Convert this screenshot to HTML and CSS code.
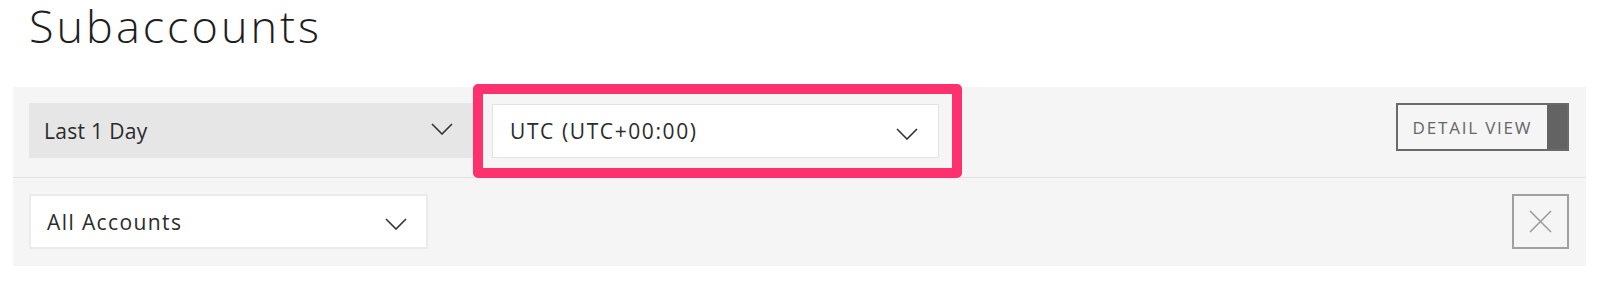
FILE: index.html
```html
<!DOCTYPE html>
<html lang="en">
<head>
<meta charset="utf-8">
<title>Subaccounts</title>
<link rel="stylesheet" href="styles.css">
</head>
<body>
<h1 class="title">Subaccounts</h1>
<div class="panel">
  <div class="row row-top">
    <div class="select select-grey">
      <span class="select-label">Last 1 Day</span>
      <svg class="chevron chevron-up" width="22" height="12" viewBox="0 0 22 12"><polyline points="1,1 11,11 21,1" fill="none" stroke="#333" stroke-width="1.6"/></svg>
    </div>
    <div class="highlight">
      <div class="select select-white select-tz">
        <span class="select-label">UTC (UTC+00:00)</span>
        <svg class="chevron" width="22" height="12" viewBox="0 0 22 12"><polyline points="1,1 11,11 21,1" fill="none" stroke="#333" stroke-width="1.6"/></svg>
      </div>
    </div>
    <button class="toggle" type="button">
      <span class="toggle-label">DETAIL VIEW</span>
      <span class="toggle-knob"></span>
    </button>
  </div>
  <div class="row row-bottom">
    <div class="select select-white select-accounts">
      <span class="select-label">All Accounts</span>
      <svg class="chevron" width="22" height="12" viewBox="0 0 22 12"><polyline points="1,1 11,11 21,1" fill="none" stroke="#333" stroke-width="1.6"/></svg>
    </div>
    <button class="clear" type="button" aria-label="Clear">
      <svg width="23" height="23" viewBox="0 0 23 23"><path d="M1 1 L22 22 M22 1 L1 22" fill="none" stroke="#999" stroke-width="1.5"/></svg>
    </button>
  </div>
</div>
</body>
</html>
```

FILE: styles.css
```css
* { box-sizing: border-box; }

body {
  margin: 0;
  background: #ffffff;
  font-family: "Open Sans", "Noto Sans", sans-serif;
  color: #2b2b2b;
}

.title {
  margin: 0 0 36px 29px;
  font-family: "Open Sans", sans-serif;
  font-weight: 300;
  font-size: 45px;
  line-height: 51px;
  letter-spacing: 3px;
  color: #1e1e1e;
}

.panel {
  margin-left: 13px;
  width: 1573px;
  background: #f5f5f5;
}

.row {
  display: flex;
  align-items: flex-start;
  padding: 16px 17px 0 16px;
}

.row-top {
  height: 91px;
  border-bottom: 1px solid #e2e2e2;
}

.row-bottom {
  height: 88px;
}

.select {
  display: flex;
  align-items: center;
  justify-content: space-between;
  height: 55px;
  font-size: 21px;
  letter-spacing: 0.3px;
  color: #2b2b2b;
}

.select-grey {
  width: 447px;
  padding: 0 23px 0 15px;
  background: #e6e6e6;
}

.select-white {
  background: #ffffff;
  border: 1px solid #e3e3e3;
}

.select-tz {
  width: 447px;
  height: 54px;
  margin-top: 1px;
  padding: 0 20px 0 17px;
  letter-spacing: 1.6px;
}

.select-accounts {
  width: 399px;
  border-width: 2px;
  border-color: #ebebeb;
  padding: 0 19px 0 16px;
  letter-spacing: 1.4px;
}

.chevron { display: block; margin-top: 5px; }
.chevron-up { margin-top: -3px; }

.highlight {
  position: relative;
  margin-left: 16px;
}

.highlight::after {
  content: "";
  position: absolute;
  top: -19px;
  left: -19px;
  right: -23px;
  bottom: -20px;
  border: 10px solid #fe316f;
  border-radius: 5px;
  pointer-events: none;
}

.toggle {
  margin-left: auto;
  display: flex;
  align-items: stretch;
  width: 173px;
  height: 48px;
  padding: 0;
  border: 2px solid #6a6a6a;
  background: #f5f5f5;
  cursor: pointer;
}

.toggle-label {
  flex: 1;
  display: flex;
  align-items: center;
  justify-content: center;
  font-family: "Open Sans", sans-serif;
  font-size: 17px;
  letter-spacing: 1.8px;
  color: #666666;
}

.toggle-knob {
  width: 20px;
  background: #636363;
}

.clear {
  margin-left: auto;
  display: flex;
  align-items: center;
  justify-content: center;
  width: 57px;
  height: 55px;
  padding: 0;
  border: 2px solid #a0a0a0;
  background: transparent;
  cursor: pointer;
}

.clear svg { display: block; }
```
